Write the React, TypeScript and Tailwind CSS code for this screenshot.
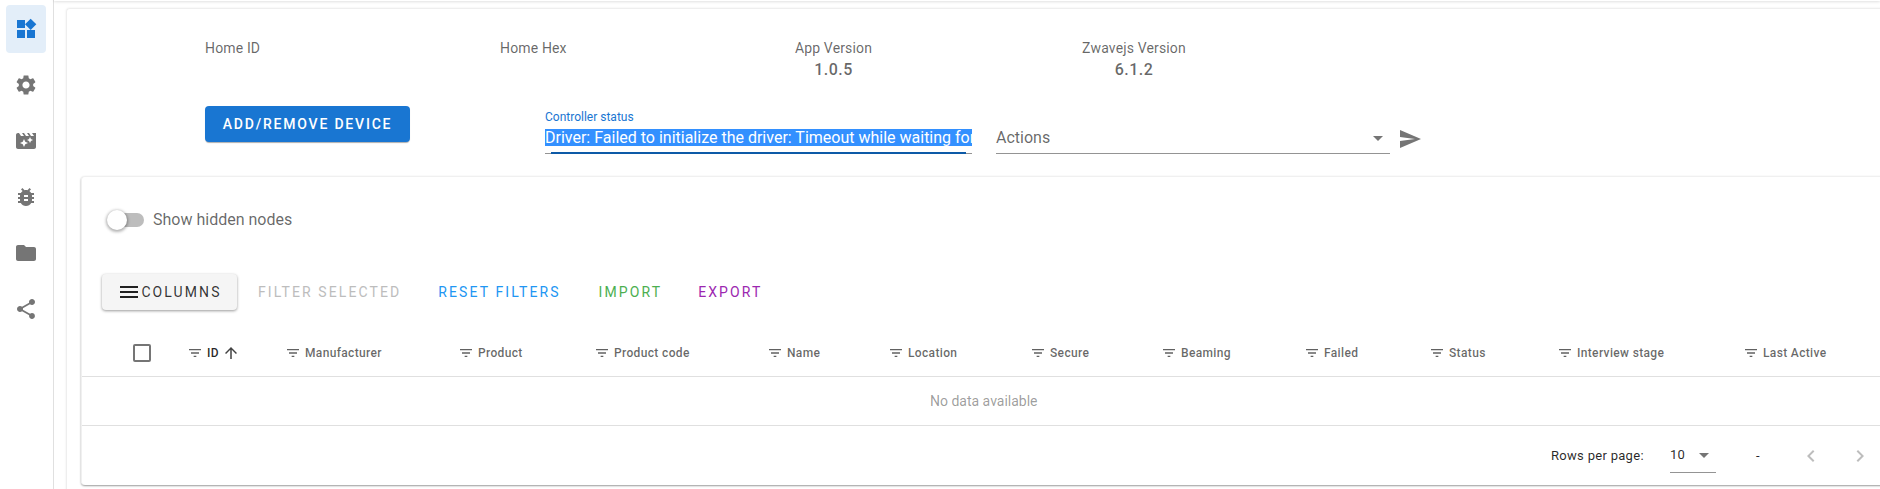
const ICONS = {
  widgets: "M13 13v8h8v-8h-8zM3 21h8v-8H3v8zM3 3v8h8V3H3zm13.66-1.31L11 7.34 16.66 13l5.66-5.66-5.66-5.65z",
  settings: "M19.14 12.94c.04-.3.06-.61.06-.94 0-.32-.02-.64-.07-.94l2.03-1.58c.18-.14.23-.41.12-.61l-1.92-3.32c-.12-.22-.37-.29-.59-.22l-2.39.96c-.5-.38-1.03-.7-1.62-.94l-.36-2.54c-.04-.24-.24-.41-.48-.41h-3.84c-.24 0-.43.17-.47.41l-.36 2.54c-.59.24-1.13.57-1.62.94l-2.39-.96c-.22-.08-.47 0-.59.22L2.74 8.87c-.12.21-.08.47.12.61l2.03 1.58c-.05.3-.09.63-.09.94s.02.64.07.94l-2.03 1.58c-.18.14-.23.41-.12.61l1.92 3.32c.12.22.37.29.59.22l2.39-.96c.5.38 1.03.7 1.62.94l.36 2.54c.05.24.24.41.48.41h3.84c.24 0 .44-.17.47-.41l.36-2.54c.59-.24 1.13-.56 1.62-.94l2.39.96c.22.08.47 0 .59-.22l1.92-3.32c.12-.22.07-.47-.12-.61l-2.01-1.58zM12 15.6c-1.98 0-3.6-1.62-3.6-3.6s1.62-3.6 3.6-3.6 3.6 1.62 3.6 3.6-1.62 3.6-3.6 3.6z",
  movie: "M18 4l2 3h-3l-2-3h-2l2 3h-3l-2-3H8l2 3H7L5 4H4c-1.1 0-1.99.9-1.99 2L2 18c0 1.1.9 2 2 2h16c1.1 0 2-.9 2-2V4h-4zm-6.75 11.25L10 18l-1.25-2.75L6 14l2.75-1.25L10 10l1.25 2.75L14 14l-2.75 1.25zm5.69-3.31L16 14l-.94-2.06L13 11l2.06-.94L16 8l.94 2.06L19 11l-2.06.94z",
  bug: "M20 8h-2.81c-.45-.78-1.07-1.45-1.82-1.96L17 4.41 15.59 3l-2.17 2.17C12.96 5.06 12.49 5 12 5c-.49 0-.96.06-1.41.17L8.41 3 7 4.41l1.62 1.63C7.88 6.55 7.26 7.22 6.81 8H4v2h2.09c-.05.33-.09.66-.09 1v1H4v2h2v1c0 .34.04.67.09 1H4v2h2.81c1.04 1.79 2.97 3 5.19 3s4.15-1.21 5.19-3H20v-2h-2.09c.05-.33.09-.66.09-1v-1h2v-2h-2v-1c0-.34-.04-.67-.09-1H20V8zm-6 8h-4v-2h4v2zm0-4h-4v-2h4v2z",
  folder: "M10 4H4c-1.1 0-1.99.9-1.99 2L2 18c0 1.1.9 2 2 2h16c1.1 0 2-.9 2-2V8c0-1.1-.9-2-2-2h-8l-2-2z",
  share: "M18 16.08c-.76 0-1.44.3-1.96.77L8.91 12.7c.05-.23.09-.46.09-.7s-.04-.47-.09-.7l7.05-4.11c.54.5 1.25.81 2.04.81 1.66 0 3-1.34 3-3s-1.34-3-3-3-3 1.34-3 3c0 .24.04.47.09.7L8.04 9.81C7.5 9.31 6.79 9 6 9c-1.66 0-3 1.34-3 3s1.34 3 3 3c.79 0 1.5-.31 2.04-.81l7.12 4.16c-.05.21-.08.43-.08.65 0 1.61 1.31 2.92 2.92 2.92 1.61 0 2.92-1.31 2.92-2.92s-1.31-2.92-2.92-2.92z",
  send: "M2.01 21L23 12 2.01 3 2 10l15 2-15 2z",
  filter: "M10 18h4v-2h-4v2zM3 6v2h18V6H3zm3 7h12v-2H6v2z",
  up: "M4 12l1.41 1.41L11 7.83V20h2V7.83l5.58 5.59L20 12l-8-8-8 8z",
  menu: "M3 18h18v-2H3v2zm0-5h18v-2H3v2zm0-7v2h18V6H3z",
  left: "M15.41 7.41L14 6l-6 6 6 6 1.41-1.41L10.83 12z",
  right: "M10 6L8.59 7.41 13.17 12l-4.58 4.59L10 18l6-6z",
  caret: "M7 10l5 5 5-5z",
};

function Icon({ d, className }: { d: string; className: string }) {
  return (
    <svg viewBox="0 0 24 24" className={className} fill="currentColor">
      <path d={d} />
    </svg>
  );
}

const NAV = [ICONS.widgets, ICONS.settings, ICONS.movie, ICONS.bug, ICONS.folder, ICONS.share];

const COLUMNS = [
  { title: "ID", width: "w-[98px]" },
  { title: "Manufacturer", width: "w-[173px]" },
  { title: "Product", width: "w-[136px]" },
  { title: "Product code", width: "w-[173px]" },
  { title: "Name", width: "w-[121px]" },
  { title: "Location", width: "w-[142px]" },
  { title: "Secure", width: "w-[131px]" },
  { title: "Beaming", width: "w-[143px]" },
  { title: "Failed", width: "w-[125px]" },
  { title: "Status", width: "w-[128px]" },
  { title: "Interview stage", width: "w-[186px]" },
  { title: "Last Active", width: "w-[136px]" },
];

export default function App() {
  return (
    <div className="flex h-[489px] w-[1880px] overflow-hidden bg-white text-[14px] text-black/60 [font-family:Roboto,sans-serif]">
      <aside className="flex w-[54px] shrink-0 flex-col gap-2 border-r border-[#e0e0e0] pt-[5px] pl-[6px]">
        {NAV.map((d, i) => (
          <div
            key={i}
            className={`flex h-12 w-10 items-center justify-center rounded ${i === 0 ? "bg-[#e3eef9] text-[#1976d2]" : "text-[#757575]"}`}
          >
            <Icon d={d} className="h-6 w-6" />
          </div>
        ))}
      </aside>

      <main className="relative min-w-0 flex-1 pt-2 pl-3">
        <div className="absolute top-[-4px] right-0 left-0 h-[5px] bg-white shadow-[0_1px_3px_rgba(0,0,0,0.12)]" />

        <div className="h-[520px] w-[1850px] rounded-tl border-l border-t border-[#eeeeee] pt-[29px] pl-[14px] shadow-[0_0_2px_rgba(0,0,0,0.1)]">
          <div className="flex h-[68px] pl-[124px] tracking-[0.15px]">
            <div className="w-[295px]">Home ID</div>
            <div className="w-[187px]">Home Hex</div>
            <div className="flex w-[293px] flex-col items-center">
              <span>App Version</span>
              <span className="text-[16px] leading-[22px] font-medium tracking-[0.5px]">1.0.5</span>
            </div>
            <div className="flex w-[308px] flex-col items-center">
              <span>Zwavejs Version</span>
              <span className="text-[16px] leading-[22px] font-medium tracking-[0.5px]">6.1.2</span>
            </div>
          </div>

          <div className="flex h-[70px] pl-[124px]">
            <button className="h-9 w-[205px] rounded bg-[#1976d2] text-[14px] font-medium tracking-[1.8px] text-white shadow-[0_2px_1px_-1px_rgba(0,0,0,0.2),0_1px_1px_rgba(0,0,0,0.14)]">
              ADD/REMOVE DEVICE
            </button>
            <div className="relative ml-[135px] h-12 w-[427px] border-b border-[#949494]">
              <div className="absolute bottom-[-1px] left-[6px] h-[2px] w-[415px] bg-[#0d5aa7]" />
              <div className="pt-[4px] text-[12px] leading-[14px] text-[#1976d2]">Controller status</div>
              <div className="mt-[5px] h-[17px] overflow-hidden whitespace-nowrap bg-[#3390ff] text-[16px] leading-[17px] text-white">
                Driver: Failed to initialize the driver: Timeout while waiting for
              </div>
            </div>
            <div className="relative ml-6 h-12 w-[394px] border-b border-[#949494]">
              <span className="absolute top-[22px] left-0 text-[16px] leading-[19px]">Actions</span>
              <Icon d={ICONS.caret} className="absolute top-[20px] right-0 h-6 w-6 text-[#757575]" />
            </div>
            <Icon d={ICONS.send} className="mt-[21px] ml-[8px] h-6 w-6 text-[#757575]" />
          </div>

          <div className="h-[309px] rounded-[4px] border-l border-t border-[#f0f0f0] shadow-[0_1px_2px_rgba(0,0,0,0.4)]">
            <div className="flex h-[73px] items-center pt-[13px] pl-[28px]">
              <div className="relative h-[14px] w-[34px] rounded-full bg-[#bdbdbd]">
                <div className="absolute top-[-3px] left-[-3px] h-5 w-5 rounded-full bg-white shadow-[0_1px_3px_1px_rgba(0,0,0,0.3)]" />
              </div>
              <span className="ml-[9px] text-[16px]">Show hidden nodes</span>
            </div>

            <div className="mt-6 flex h-9 items-center pl-5 text-[14px] tracking-[2.1px]">
              <button className="flex h-9 w-[135px] items-center justify-center rounded bg-[#f5f5f5] text-black/80 shadow-[0_1px_3px_rgba(0,0,0,0.4)]">
                <Icon d={ICONS.menu} className="h-6 w-6 text-[#212121]" />
                COLUMNS
              </button>
              <span className="ml-[21px] text-[#bdbdbd]">FILTER SELECTED</span>
              <span className="ml-[37px] text-[#2196f3]">RESET FILTERS</span>
              <span className="ml-[38px] text-[#4caf50]">IMPORT</span>
              <span className="ml-[36px] text-[#9c27b0]">EXPORT</span>
            </div>

            <div className="mt-[19px] flex h-12 items-center border-b border-[#e0e0e0] text-[12px] font-medium tracking-[0.35px]">
              <div className="ml-[51px] h-[18px] w-[18px] rounded-[2px] border-2 border-[#757575]" />
              <div className="flex pl-[36px]">
                {COLUMNS.map((c) => (
                  <div key={c.title} className={`flex items-center ${c.width}`}>
                    <Icon d={ICONS.filter} className="mr-[4px] h-4 w-4 text-[#616161]" />
                    <span className={c.title === "ID" ? "text-black/85" : ""}>{c.title}</span>
                    {c.title === "ID" && <Icon d={ICONS.up} className="ml-[3px] h-[18px] w-[18px] text-[#424242]" />}
                  </div>
                ))}
              </div>
            </div>

            <div className="flex h-[49px] items-center border-b border-[#e0e0e0] pl-[848px] text-[14px] text-black/40">
              No data available
            </div>

            <div className="flex h-[59px] items-center text-[13px] tracking-[0.3px] text-black/85">
              <span className="ml-[1469px]">Rows per page:</span>
              <div className="relative ml-[26px] flex h-[35px] w-[46px] items-center border-b border-[#949494]">
                10
                <Icon d={ICONS.caret} className="absolute top-[5px] right-0 h-6 w-6 text-[#757575]" />
              </div>
              <span className="ml-[40px]">-</span>
              <Icon d={ICONS.left} className="ml-[39px] h-6 w-6 text-[#bdbdbd]" />
              <Icon d={ICONS.right} className="ml-[25px] h-6 w-6 text-[#bdbdbd]" />
            </div>
          </div>
        </div>
      </main>
    </div>
  );
}
